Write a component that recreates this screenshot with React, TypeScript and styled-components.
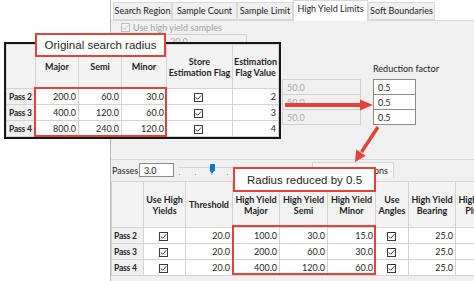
import React from "react";
import styled, { createGlobalStyle } from "styled-components";

const RED = "#e2423a";
const UI_FONT = `Lato, "Noto Sans", sans-serif`;

const Global = createGlobalStyle`
  html, body { margin: 0; padding: 0; background: #fff; }
  body { width: 474px; height: 281px; overflow: hidden; font-family: ${UI_FONT}; }
`;

const Stage = styled.div`
  position: relative;
  width: 474px;
  height: 281px;
  overflow: hidden;
  display: flex;
  background: #fff;
`;

const Blank = styled.div`
  width: 110px;
  flex: none;
`;

const Window = styled.div`
  flex: 1;
  min-width: 0;
  overflow: hidden;
  display: flex;
  flex-direction: column;
  border-left: 1px solid #b9b9b9;
  background: #f0f0f0;
  font-family: ${UI_FONT};
  font-size: 9px;
  color: #1e1e1e;
`;

const TabStrip = styled.div`
  height: 20px;
  flex: none;
  background: #fff;
  display: flex;
  align-items: flex-end;
  padding-left: 2px;
  border-bottom: 1px solid #d9d9d9;
`;

const Tab = styled.div<{ $w: number; $active?: boolean }>`
  width: ${(p) => p.$w}px;
  flex: none;
  box-sizing: border-box;
  height: ${(p) => (p.$active ? 21 : 18)}px;
  margin-bottom: ${(p) => (p.$active ? -1 : 0)}px;
  background: ${(p) => (p.$active ? "#fff" : "#f0f0f0")};
  border: 1px solid #d9d9d9;
  border-bottom: ${(p) => (p.$active ? "none" : "1px solid #d9d9d9")};
  display: flex;
  align-items: center;
  justify-content: center;
  padding-bottom: ${(p) => (p.$active ? 5 : 1)}px;
  white-space: nowrap;
  position: relative;
  z-index: ${(p) => (p.$active ? 1 : 0)};
`;

const Panel = styled.div`
  flex: 1;
  display: flex;
  flex-direction: column;
  min-height: 0;
`;

const UpperArea = styled.div`
  height: 139px;
  flex: none;
  box-sizing: border-box;
  padding-top: 1px;
  border-bottom: 1px solid #d6d6d6;
  display: flex;
  flex-direction: column;
`;

const CheckRow = styled.div`
  height: 10px;
  margin-left: 10px;
  display: flex;
  align-items: center;
  gap: 3px;
  color: #a3a3a3;
`;

const Field = styled.div<{ $w: number; $disabled?: boolean }>`
  width: ${(p) => p.$w}px;
  height: 16px;
  box-sizing: border-box;
  border: 1px solid ${(p) => (p.$disabled ? "#d0d0d0" : "#8a8a8a")};
  background: ${(p) => (p.$disabled ? "#f0f0f0" : "#fff")};
  color: ${(p) => (p.$disabled ? "#a8a8a8" : "#1e1e1e")};
  padding-left: 4px;
  display: flex;
  align-items: center;
  & + & {
    margin-top: -1px;
  }
`;

const TopField = styled(Field)`
  margin-top: 2px;
  margin-left: 54px;
  height: 14px;
`;

const FactorArea = styled.div`
  margin-top: 14px;
  padding-left: 171px;
  display: flex;
  gap: 12px;
`;

const FieldColumn = styled.div`
  display: flex;
  flex-direction: column;
`;

const ColLabel = styled.div`
  height: 17px;
  line-height: 14px;
  white-space: nowrap;
  color: #1e1e1e;
`;

const LowerArea = styled.div`
  display: flex;
  flex-direction: column;
`;

const PassesRow = styled.div`
  margin-top: 2px;
  height: 16px;
  display: flex;
  align-items: center;
  padding-left: 1px;
`;

const PassLabel = styled.span`
  width: 27px;
  flex: none;
`;

const PassField = styled(Field)`
  height: 14px;
`;

const Slider = styled.div`
  position: relative;
  width: 128px;
  height: 16px;
  margin-left: 5px;
  flex: none;
`;

const Track = styled.div`
  position: absolute;
  left: 0;
  right: 0;
  top: 5px;
  height: 1px;
  background: #d2d2d2;
`;

const Ticks = styled.div`
  position: absolute;
  left: 0;
  right: 0;
  top: 12px;
  height: 1px;
  background: repeating-linear-gradient(90deg, #9a9a9a 0 1px, transparent 1px 16px);
`;

const Thumb = styled.div`
  position: absolute;
  left: 31px;
  top: 2px;
  width: 5px;
  height: 7px;
  background: #0078d7;
  border-radius: 1px 1px 0 0;
  &::after {
    content: "";
    position: absolute;
    left: 0;
    top: 7px;
    border-left: 2.5px solid transparent;
    border-right: 2.5px solid transparent;
    border-top: 3px solid #0078d7;
  }
`;

const OptionTab = styled.div`
  margin-left: 5px;
  width: 82px;
  height: 16px;
  box-sizing: border-box;
  border: 1px solid #d4d4d4;
  border-bottom: none;
  background: #f6f6f6;
  display: flex;
  align-items: center;
  justify-content: flex-end;
  padding-right: 5px;
  white-space: nowrap;
`;

const Grid = styled.table<{ $w: number }>`
  border-collapse: collapse;
  table-layout: fixed;
  width: ${(p) => p.$w}px;
  font-family: ${UI_FONT};
  font-size: 9px;
  color: #1e1e1e;
`;

const LowerGrid = styled(Grid)`
  margin-top: 3px;
  background: #fff;
`;

const Head = styled.th<{ $h: number }>`
  height: ${(p) => p.$h}px;
  padding: 0;
  border: 1px solid #d3d3d3;
  background: #f3f3f3;
  font-weight: 700;
  line-height: 11px;
  text-align: center;
  vertical-align: middle;
  white-space: pre;
  overflow: hidden;
`;

const RowHead = styled.th`
  height: 15px;
  padding: 0 0 0 2px;
  border: 1px solid #d3d3d3;
  background: #f0f0f0;
  font-size: 8.5px;
  letter-spacing: -0.2px;
  font-weight: 700;
  text-align: left;
  white-space: nowrap;
  overflow: hidden;
`;

const Cell = styled.td<{ $center?: boolean }>`
  height: 15px;
  padding: 0 2px 0 0;
  border: 1px solid #d3d3d3;
  background: #fff;
  text-align: ${(p) => (p.$center ? "center" : "right")};
  white-space: nowrap;
  overflow: hidden;
  line-height: 10px;
  & > svg {
    display: inline-block;
    vertical-align: middle;
  }
`;

const Inset = styled.div`
  position: absolute;
  left: 4px;
  top: 42px;
  border: 2px solid #161616;
  background: #fff;
  z-index: 2;
`;

const Callout = styled.div<{ $x: number; $y: number; $w: number; $h: number }>`
  position: absolute;
  left: ${(p) => p.$x}px;
  top: ${(p) => p.$y}px;
  width: ${(p) => p.$w}px;
  height: ${(p) => p.$h}px;
  box-sizing: border-box;
  border: 2px solid ${RED};
  background: #fff;
  display: flex;
  align-items: center;
  justify-content: center;
  font-family: "Liberation Sans", Arial, sans-serif;
  font-size: 11.5px;
  color: #262626;
  white-space: nowrap;
  z-index: 4;
`;

const Frame = styled.div<{ $x: number; $y: number; $w: number; $h: number }>`
  position: absolute;
  left: ${(p) => p.$x}px;
  top: ${(p) => p.$y}px;
  width: ${(p) => p.$w}px;
  height: ${(p) => p.$h}px;
  box-sizing: border-box;
  border: 2px solid ${RED};
  z-index: 3;
`;

const Arrows = styled.svg`
  position: absolute;
  left: 0;
  top: 0;
  width: 474px;
  height: 281px;
  pointer-events: none;
  z-index: 5;
`;

const Check = ({ disabled }: { disabled?: boolean }) => (
  <svg width="9" height="9" viewBox="0 0 9 9">
    <rect
      x="0.5"
      y="0.5"
      width="8"
      height="8"
      fill={disabled ? "#f4f4f4" : "#fff"}
      stroke={disabled ? "#c0c0c0" : "#3c3c3c"}
    />
    <path
      d="M1.9 4.5 L3.7 6.3 L7.1 2.5"
      fill="none"
      stroke={disabled ? "#c0c0c0" : "#3c3c3c"}
      strokeWidth="1"
    />
  </svg>
);

type Val = string | "check";

const insetCols = [29, 43, 43, 45, 66, 46];
const insetHeads = ["", "Major", "Semi", "Minor", "Store\nEstimation Flag", "Estimation\nFlag Value"];
const insetRows: [string, Val[]][] = [
  ["Pass 2", ["200.0", "60.0", "30.0", "check", "2"]],
  ["Pass 3", ["400.0", "120.0", "60.0", "check", "3"]],
  ["Pass 4", ["800.0", "240.0", "120.0", "check", "4"]],
];

const lowerCols = [32, 42, 47, 47, 48, 48, 33, 47, 47];
const lowerHeads = [
  "",
  "Use High\nYields",
  "Threshold",
  "High Yield\nMajor",
  "High Yield\nSemi",
  "High Yield\nMinor",
  "Use\nAngles",
  "High Yield\nBearing",
  "High Yield\nPlunge",
];
const lowerRows: [string, Val[]][] = [
  ["Pass 2", ["check", "20.0", "100.0", "30.0", "15.0", "check", "25.0", "0.0"]],
  ["Pass 3", ["check", "20.0", "200.0", "60.0", "30.0", "check", "25.0", "0.0"]],
  ["Pass 4", ["check", "20.0", "400.0", "120.0", "60.0", "check", "25.0", "0.0"]],
];

const DataGrid = ({
  cols,
  heads,
  rows,
  headH,
  as,
}: {
  cols: number[];
  heads: string[];
  rows: [string, Val[]][];
  headH: number;
  as?: typeof Grid | typeof LowerGrid;
}) => {
  const G = as ?? Grid;
  return (
    <G $w={cols.reduce((a, b) => a + b, 0)}>
      <colgroup>
        {cols.map((w, i) => (
          <col key={i} style={{ width: w }} />
        ))}
      </colgroup>
      <thead>
        <tr>
          {heads.map((h, i) => (
            <Head key={i} $h={headH}>
              {h}
            </Head>
          ))}
        </tr>
      </thead>
      <tbody>
        {rows.map(([name, vals]) => (
          <tr key={name}>
            <RowHead>{name}</RowHead>
            {vals.map((v, i) =>
              v === "check" ? (
                <Cell key={i} $center>
                  <Check />
                </Cell>
              ) : (
                <Cell key={i}>{v}</Cell>
              )
            )}
          </tr>
        ))}
      </tbody>
    </G>
  );
};

export default function App() {
  return (
    <>
      <Global />
      <Stage>
        <Blank />
        <Window>
          <TabStrip>
            <Tab $w={59}>Search Region</Tab>
            <Tab $w={65}>Sample Count</Tab>
            <Tab $w={56}>Sample Limit</Tab>
            <Tab $w={75} $active>
              High Yield Limits
            </Tab>
            <Tab $w={67}>Soft Boundaries</Tab>
          </TabStrip>
          <Panel>
            <UpperArea>
              <CheckRow>
                <Check disabled />
                <span>Use high yield samples</span>
              </CheckRow>
              <TopField $w={82} $disabled>
                20.0
              </TopField>
              <FactorArea>
                <FieldColumn>
                  <ColLabel />
                  <Field $w={79} $disabled>50.0</Field>
                  <Field $w={79} $disabled>50.0</Field>
                  <Field $w={79} $disabled>50.0</Field>
                </FieldColumn>
                <FieldColumn>
                  <ColLabel>Reduction factor</ColLabel>
                  <Field $w={43}>0.5</Field>
                  <Field $w={43}>0.5</Field>
                  <Field $w={43}>0.5</Field>
                </FieldColumn>
              </FactorArea>
            </UpperArea>
            <LowerArea>
              <PassesRow>
                <PassLabel>Passes</PassLabel>
                <PassField $w={35}>3.0</PassField>
                <Slider>
                  <Track />
                  <Ticks />
                  <Thumb />
                </Slider>
                <OptionTab>Angle Options</OptionTab>
              </PassesRow>
              <DataGrid cols={lowerCols} heads={lowerHeads} rows={lowerRows} headH={45} as={LowerGrid} />
            </LowerArea>
          </Panel>
        </Window>

        <Inset>
          <DataGrid cols={insetCols} heads={insetHeads} rows={insetRows} headH={43} />
        </Inset>

        <Frame $x={34} $y={87} $w={133} $h={50} />
        <Frame $x={232} $y={225} $w={144} $h={50} />
        <Callout $x={35} $y={33} $w={131} $h={24}>
          Original search radius
        </Callout>
        <Callout $x={233} $y={167} $w={143} $h={25}>
          Radius reduced by 0.5
        </Callout>

        <Arrows viewBox="0 0 474 281">
          <line x1="285" y1="105" x2="362" y2="105" stroke={RED} strokeWidth="4" />
          <polygon points="360,99.5 373,105 360,110.5" fill={RED} />
          <line x1="378" y1="127" x2="361.5" y2="152" stroke={RED} strokeWidth="3.5" />
          <polygon points="355,162 356.2,149.6 365.8,155.8" fill={RED} />
        </Arrows>
      </Stage>
    </>
  );
}
